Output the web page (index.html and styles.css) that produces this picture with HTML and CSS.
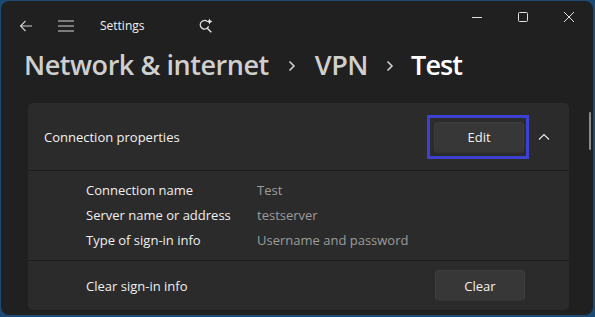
FILE: index.html
```html
<!DOCTYPE html>
<html>
<head>
<meta charset="utf-8">
<link rel="stylesheet" href="styles.css">
</head>
<body>
<div class="window">
  <div class="titlebar">
    <svg class="ico back" width="14" height="14" viewBox="0 0 14 14"><path d="M13 7H1.5M6.5 2L1.5 7l5 5" fill="none" stroke="#cfcfcf" stroke-width="1.1"/></svg>
    <svg class="ico menu" width="16" height="12" viewBox="0 0 16 12"><path d="M0 1h16M0 6h16M0 11h16" stroke="#d8d8d8" stroke-width="1.1"/></svg>
    <span class="app-title">Settings</span>
    <svg class="ico search" width="16" height="16" viewBox="0 0 16 16"><path d="M9.2 3.4A4.3 4.3 0 1 0 10.6 8.2" fill="none" stroke="#e6e6e6" stroke-width="1.2"/><path d="M9.3 10.2l4 4" stroke="#e6e6e6" stroke-width="1.3"/><path d="M11.5 0.5l0.9 2.1 2.1 0.9-2.1 0.9-0.9 2.1-0.9-2.1-2.1-0.9 2.1-0.9z" fill="#e6e6e6"/></svg>
    <div class="spacer"></div>
    <div class="caption">
      <svg width="46" height="32" viewBox="0 0 46 32"><path d="M18 16.5h10" stroke="#e0e0e0" stroke-width="1"/></svg>
      <svg width="46" height="32" viewBox="0 0 46 32"><rect x="18.5" y="11.5" width="9" height="9" rx="1" fill="none" stroke="#e0e0e0" stroke-width="1"/></svg>
      <svg width="46" height="32" viewBox="0 0 46 32"><path d="M18 11l10 10M28 11L18 21" stroke="#e0e0e0" stroke-width="1"/></svg>
    </div>
  </div>
  <div class="body">
    <div class="content">
      <h1 class="crumbs">
        <span class="crumb">Network &amp; internet</span>
        <svg class="sep" width="10" height="12" viewBox="0 0 10 12"><path d="M2.5 1.5L7 6l-4.5 4.5" fill="none" stroke="#cfcfcf" stroke-width="1.6"/></svg>
        <span class="crumb">VPN</span>
        <svg class="sep last" width="10" height="12" viewBox="0 0 10 12"><path d="M2.5 1.5L7 6l-4.5 4.5" fill="none" stroke="#cfcfcf" stroke-width="1.6"/></svg>
        <span class="crumb current">Test</span>
      </h1>
      <div class="card">
        <div class="card-head">
          <span class="label">Connection properties</span>
          <span class="focus-ring"><button class="btn">Edit</button></span>
          <svg class="chev" width="12" height="8" viewBox="0 0 12 8"><path d="M1 6.5L6 1.5l5 5" fill="none" stroke="#e6e6e6" stroke-width="1.2"/></svg>
        </div>
        <div class="props">
          <div class="prop"><span class="pk">Connection name</span><span class="pv">Test</span></div>
          <div class="prop"><span class="pk">Server name or address</span><span class="pv">testserver</span></div>
          <div class="prop"><span class="pk">Type of sign-in info</span><span class="pv">Username and password</span></div>
        </div>
        <div class="clear-row">
          <span class="pk">Clear sign-in info</span>
          <button class="btn">Clear</button>
        </div>
      </div>
    </div>
    <div class="scroll"><div class="thumb"></div></div>
  </div>
</div>
</body>
</html>
```

FILE: styles.css
```css
html, body {
  margin: 0;
  padding: 0;
}
body {
  background: #1b4a74;
  width: 595px;
  height: 317px;
  overflow: hidden;
  font-family: "Open Sans", "Noto Sans", sans-serif;
}
.window {
  margin: 1px 0 0 1px;
  width: 592px;
  height: 314px;
  background: #202020;
  border-radius: 8px;
  overflow: hidden;
  display: flex;
  flex-direction: column;
}
.titlebar {
  height: 48px;
  display: flex;
  align-items: center;
  flex: none;
}
.ico { flex: none; display: block; }
.back { margin-left: 18px; margin-top: 1px; }
.menu { margin-left: 25px; margin-top: 1px; }
.app-title {
  margin-left: 26px;
  font-size: 12px;
  color: #f0f0f0;
  margin-top: 1px;
}
.search { margin-left: 53px; margin-top: 1px; }
.spacer { flex: 1; }
.caption {
  display: flex;
  align-self: flex-start;
  margin-right: 1px;
}
.caption svg { display: block; }
.body {
  flex: 1;
  display: flex;
  min-height: 0;
}
.content {
  width: 541px;
  margin-left: 27px;
  display: flex;
  flex-direction: column;
}
.crumbs {
  margin: 0 0 0 -4px;
  height: 54px;
  padding-bottom: 23px;
  box-sizing: border-box;
  display: flex;
  align-items: center;
  font-size: 27px;
  font-weight: 600;
  letter-spacing: -0.45px;
  color: #cfcfcf;
}
.crumb { line-height: 1; }
.crumbs .sep { margin: 2px 18px 0 18px; }
.crumbs .sep.last { margin: 2px 16px 0 17px; }
.crumb.current { color: #ffffff; letter-spacing: -0.9px; }
.card {
  margin-top: 0;
  background: #2b2b2b;
  border-radius: 5px;
  display: flex;
  flex-direction: column;
}
.card-head {
  height: 67px;
  display: flex;
  align-items: center;
  padding-left: 16px;
  border-bottom: 1px solid #1c1c1c;
}
.label {
  font-size: 13px;
  color: #f2f2f2;
  flex: 1;
}
.focus-ring {
  display: flex;
  border: 3px solid #3d41d2;
  padding: 4px 2px 3px 4px;
}
.btn {
  width: 90px;
  height: 31px;
  border-radius: 4px;
  background: #373737;
  border: 1px solid #3d3d3d;
  border-bottom-color: #333333;
  color: #f2f2f2;
  font-family: inherit;
  font-size: 13px;
  padding: 0;
}
.chev {
  margin-left: 9px;
  margin-right: 19px;
}
.props {
  padding: 6px 0 8px 58px;
  border-bottom: 1px solid #1c1c1c;
}
.prop {
  height: 25px;
  display: flex;
  align-items: center;
}
.pk {
  font-size: 13px;
  color: #efefef;
}
.prop .pk { width: 171px; }
.pv {
  font-size: 13px;
  color: #9c9c9c;
}
.clear-row {
  height: 49px;
  display: flex;
  align-items: center;
  justify-content: space-between;
  padding-left: 58px;
  padding-right: 44px;
}
.scroll {
  margin-left: 20px;
  padding-top: 63px;
}
.thumb {
  width: 2px;
  height: 38px;
  background: #8b8b8b;
  border-radius: 1px;
}
```
